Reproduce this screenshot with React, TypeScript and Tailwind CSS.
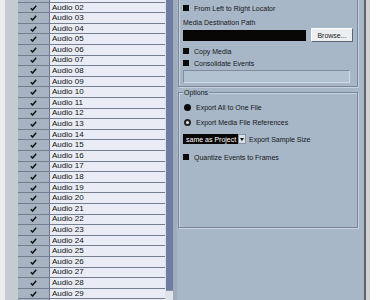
import React from 'react';

const tracks = Array.from({ length: 30 }, (_, i) => `Audio ${String(i + 1).padStart(2, '0')}`);

const CheckMark: React.FC = () => (
    <svg width="7" height="6" viewBox="0 0 7 6" className="block">
        <path d="M0.8 3.2 L2.6 5 L6.2 0.8" fill="none" stroke="#111" strokeWidth="1.5" />
    </svg>
);

const Box: React.FC<{ label: string }> = ({ label }) => (
    <div className="flex items-center h-[10px] gap-[5px]">
        <span className="w-[6px] h-[6px] bg-[#0a0a0a] shrink-0" />
        <span>{label}</span>
    </div>
);

const Radio: React.FC<{ label: string; on?: boolean }> = ({ label, on }) => (
    <div className="flex items-center h-[10px] gap-[5px] pl-[1px]">
        {on ? (
            <span className="w-[7px] h-[7px] rounded-full bg-[#0a0a0a] shrink-0" />
        ) : (
            <span className="w-[7px] h-[7px] rounded-full bg-[#e8ecf0] border-[2px] border-[#222] shrink-0" />
        )}
        <span>{label}</span>
    </div>
);

const TrackList: React.FC = () => (
    <div className="w-[147px] h-full overflow-hidden">
        <div className="mt-[-7.9px]">
            {tracks.map(t => (
                <div key={t} className="flex h-[10.6px] border-b border-[#747e92]">
                    <div className="w-[32px] bg-[#a7b3c0] border-r border-[#6e788c] flex items-center justify-center">
                        <CheckMark />
                    </div>
                    <div className="flex-1 bg-[#e9ecf5] flex items-center pl-[2px] text-[8px] leading-none text-[#111]">
                        {t}
                    </div>
                </div>
            ))}
        </div>
    </div>
);

export default function App() {
    return (
        <div className="w-[380px] h-[300px] overflow-hidden flex bg-white" style={{ fontFamily: '"Liberation Sans", Arial, sans-serif' }}>
            <div className="w-[5px] bg-[#ececec]" />
            <div className="w-[13px] bg-[#c6cbd1]" />
            <TrackList />
            <div className="w-[1px] bg-[#dde1e8]" />
            <div className="w-[7px] bg-[#6d7da3] flex flex-col">
                <div className="flex-1" />
                <div className="h-[10px] bg-[#dfe3ea] border-t border-[#8892a8]" />
            </div>
            <div className="w-[4px] bg-[#a2abb9]" />

            <div className="w-[187px] bg-[#a8b7c7] text-[7px] leading-none text-[#15161a] pl-[1px]">
                <div className="w-[180px] mt-[-10px] border border-[#7b8798] shadow-[1px_1px_0_#c8d3df,inset_1px_1px_0_#c8d3df] pt-[12px] pb-[3px] pl-[4px] pr-[4px]">
                    <Box label="From Left to Right Locator" />
                    <div className="mt-[4px] h-[10px] flex items-center">Media Destination Path</div>
                    <div className="mt-[1px] h-[14px] flex items-center gap-[5px]">
                        <div className="w-[123px] h-[11px] bg-[#080505]" />
                        <div className="w-[42px] h-[14px] bg-[#eceef2] border border-t-[#ffffff] border-l-[#ffffff] border-r-[#5d6474] border-b-[#5d6474] flex items-center justify-center text-[#222]">
                            Browse...
                        </div>
                    </div>
                    <div className="mt-[4px]">
                        <Box label="Copy Media" />
                    </div>
                    <div className="mt-[2px]">
                        <Box label="Consolidate Events" />
                    </div>
                    <div className="mt-[2px] w-[167px] h-[13px] bg-[#b3c2d1] border border-t-[#7f8c9c] border-l-[#7f8c9c] border-r-[#d2dce6] border-b-[#d2dce6]" />
                </div>

                <div className="relative w-[180px] h-[136px] mt-[5px] border border-[#7b8798] shadow-[1px_1px_0_#c8d3df,inset_1px_1px_0_#c8d3df] pt-[9px] pl-[4px]">
                    <span className="absolute left-[4px] top-[-4px] bg-[#a8b7c7] px-[1px]">Options</span>
                    <Radio label="Export All to One File" on />
                    <div className="mt-[5px]">
                        <Radio label="Export Media File References" />
                    </div>
                    <div className="mt-[7px] h-[10px] flex items-center gap-[3px]">
                        <div className="flex h-[10px] w-[63px] bg-[#080505]">
                            <div className="flex-1 flex items-center pl-[3px] text-white">same as Project</div>
                            <div className="w-[8px] bg-[#d9dde5] border border-[#8a93a3] flex items-center justify-center">
                                <svg width="4" height="3" viewBox="0 0 4 3"><path d="M0 0 H4 L2 3 Z" fill="#111" /></svg>
                            </div>
                        </div>
                        <span>Export Sample Size</span>
                    </div>
                    <div className="mt-[8px]">
                        <Box label="Quantize Events to Frames" />
                    </div>
                </div>
            </div>

            <div className="w-[2px] bg-[#5c6272]" />
            <div className="w-[4px] bg-[#d2d2d2]" />
            <div className="flex-1 bg-white" />
        </div>
    );
}
